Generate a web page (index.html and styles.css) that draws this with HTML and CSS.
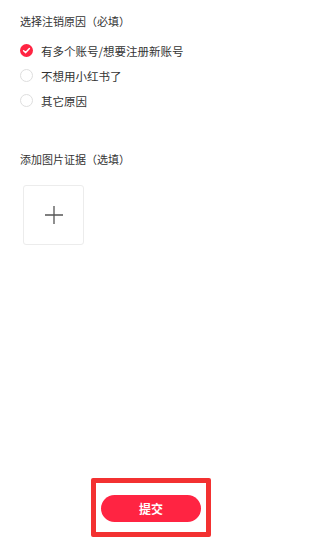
FILE: index.html
```html
<!DOCTYPE html>
<html lang="zh-CN">
<head>
<meta charset="utf-8">
<link rel="stylesheet" href="styles.css">
</head>
<body>
<div class="page">
  <div class="section-title first">选择注销原因（必填）</div>
  <ul class="options">
    <li class="option">
      <span class="radio checked">
        <svg viewBox="0 0 13 13" width="13" height="13"><path d="M3.6 6.7 L5.7 8.6 L9.4 4.6" fill="none" stroke="#fff" stroke-width="1.5" stroke-linecap="round" stroke-linejoin="round"/></svg>
      </span>
      <span class="label">有多个账号/想要注册新账号</span>
    </li>
    <li class="option">
      <span class="radio"></span>
      <span class="label">不想用小红书了</span>
    </li>
    <li class="option">
      <span class="radio"></span>
      <span class="label">其它原因</span>
    </li>
  </ul>
  <div class="section-title second">添加图片证据（选填）</div>
  <div class="upload">
    <svg viewBox="0 0 18 18" width="18" height="18"><path d="M9 0 V18 M0 9 H18" stroke="#555" stroke-width="1.3" fill="none"/></svg>
  </div>
  <div class="footer">
    <div class="highlight">
      <button class="submit">提交</button>
    </div>
  </div>
</div>
</body>
</html>
```
FILE: styles.css
```css
html, body {
  margin: 0;
  padding: 0;
  background: #fff;
}
body {
  font-family: "Noto Sans CJK SC", "Noto Sans", sans-serif;
  color: #333;
}
.page {
  width: 240px;
  height: 548px;
  box-sizing: border-box;
  padding: 13px 0 11px 20px;
  display: flex;
  flex-direction: column;
}
.section-title {
  font-size: 11px;
  line-height: 16px;
  color: #333;
}
.section-title.second {
  margin-top: 38px;
}
.options {
  list-style: none;
  margin: 9px 0 0;
  padding: 0;
}
.option {
  display: flex;
  align-items: center;
  height: 25px;
  font-size: 11.5px;
  color: #333;
}
.radio {
  width: 13px;
  height: 13px;
  box-sizing: border-box;
  border-radius: 50%;
  border: 1px solid #dedede;
  margin-right: 8px;
  flex: none;
  display: flex;
}
.radio.checked {
  border: none;
  background: #ff2442;
}
.upload {
  margin: 18px 0 0 3px;
  width: 61px;
  height: 60px;
  box-sizing: border-box;
  border: 1px solid #ececec;
  border-radius: 3px;
  display: flex;
  align-items: center;
  justify-content: center;
}
.footer {
  margin-top: auto;
  display: flex;
  padding-left: 71px;
}
.highlight {
  border: 5px solid #f33131;
  border-radius: 2px;
  padding: 12px 5px 10px;
}
.submit {
  display: block;
  width: 100px;
  height: 27px;
  border: none;
  border-radius: 14px;
  background: #ff2442;
  color: #fff;
  font-family: "Noto Sans CJK SC", sans-serif;
  font-size: 12px;
  font-weight: bold;
  padding: 0;
}
```
